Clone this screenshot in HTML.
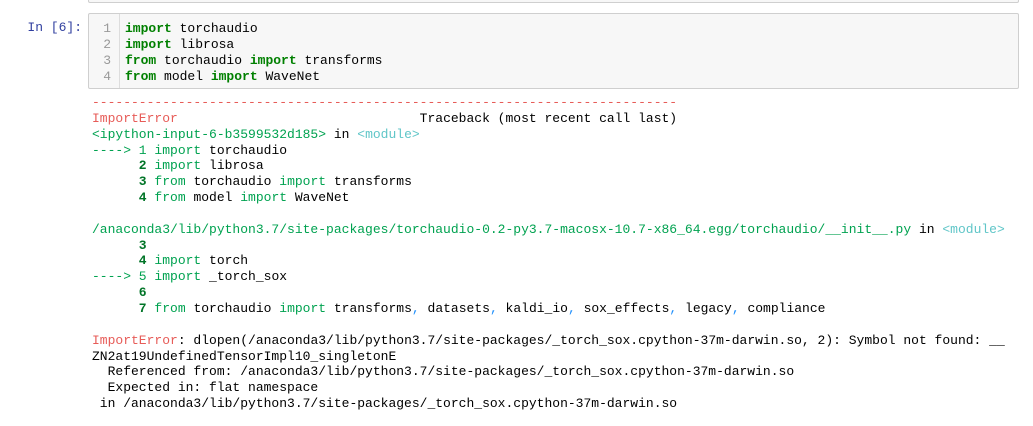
<!DOCTYPE html>
<html><head><meta charset="utf-8"><style>
body{margin:0;background:#fff;width:1033px;height:426px;overflow:hidden;position:relative;font-family:"Liberation Mono",monospace;font-size:13px}
.prev{position:absolute;left:88px;top:-10px;width:929px;height:11px;border:1px solid #cfcfcf;background:#f7f7f7;border-radius:2px}
.prompt{position:absolute;left:0;top:20px;width:82px;text-align:right;color:#303f9f;line-height:16px}
.box{position:absolute;left:88px;top:13px;width:929px;height:74px;border:1px solid #cfcfcf;background:#f7f7f7;border-radius:2px}
.gut{position:absolute;left:0;top:0;width:30px;height:74px;border-right:1px solid #ddd;}
.ln{position:absolute;left:0;top:7px;width:22px;text-align:right;color:#999;line-height:15.9px;white-space:pre}
.code{position:absolute;left:36px;top:7px;line-height:15.9px;white-space:pre;color:#000}
.k{color:#008000;font-weight:bold}
.out{position:absolute;left:92px;top:95px;line-height:15.84px;white-space:pre;color:#000;margin:0;font-family:inherit;font-size:13px}
.r{color:#e75c58}.g{color:#00a250}.gb{color:#007427;font-weight:bold}.c{color:#60c6c8}.b{color:#208ffb}
</style></head><body>
<div class="prev"></div>
<div class="prompt">In&nbsp;[6]:</div>
<div class="box"><div class="gut"></div>
<div class="ln">1
2
3
4</div>
<div class="code"><span class="k">import</span> torchaudio
<span class="k">import</span> librosa
<span class="k">from</span> torchaudio <span class="k">import</span> transforms
<span class="k">from</span> model <span class="k">import</span> WaveNet</div></div>
<pre class="out"><span class="r">---------------------------------------------------------------------------</span>
<span class="r">ImportError</span>                               Traceback (most recent call last)
<span class="g">&lt;ipython-input-6-b3599532d185&gt;</span> in <span class="c">&lt;module&gt;</span>
<span class="g">----&gt; 1</span> <span class="g">import</span> torchaudio
<span class="gb">      2</span> <span class="g">import</span> librosa
<span class="gb">      3</span> <span class="g">from</span> torchaudio <span class="g">import</span> transforms
<span class="gb">      4</span> <span class="g">from</span> model <span class="g">import</span> WaveNet

<span class="g">/anaconda3/lib/python3.7/site-packages/torchaudio-0.2-py3.7-macosx-10.7-x86_64.egg/torchaudio/__init__.py</span> in <span class="c">&lt;module&gt;</span>
<span class="gb">      3</span> 
<span class="gb">      4</span> <span class="g">import</span> torch
<span class="g">----&gt; 5</span> <span class="g">import</span> _torch_sox
<span class="gb">      6</span> 
<span class="gb">      7</span> <span class="g">from</span> torchaudio <span class="g">import</span> transforms<span class="b">,</span> datasets<span class="b">,</span> kaldi_io<span class="b">,</span> sox_effects<span class="b">,</span> legacy<span class="b">,</span> compliance

<span class="r">ImportError</span>: dlopen(/anaconda3/lib/python3.7/site-packages/_torch_sox.cpython-37m-darwin.so, 2): Symbol not found: __
ZN2at19UndefinedTensorImpl10_singletonE
  Referenced from: /anaconda3/lib/python3.7/site-packages/_torch_sox.cpython-37m-darwin.so
  Expected in: flat namespace
 in /anaconda3/lib/python3.7/site-packages/_torch_sox.cpython-37m-darwin.so</pre>
</body></html>
